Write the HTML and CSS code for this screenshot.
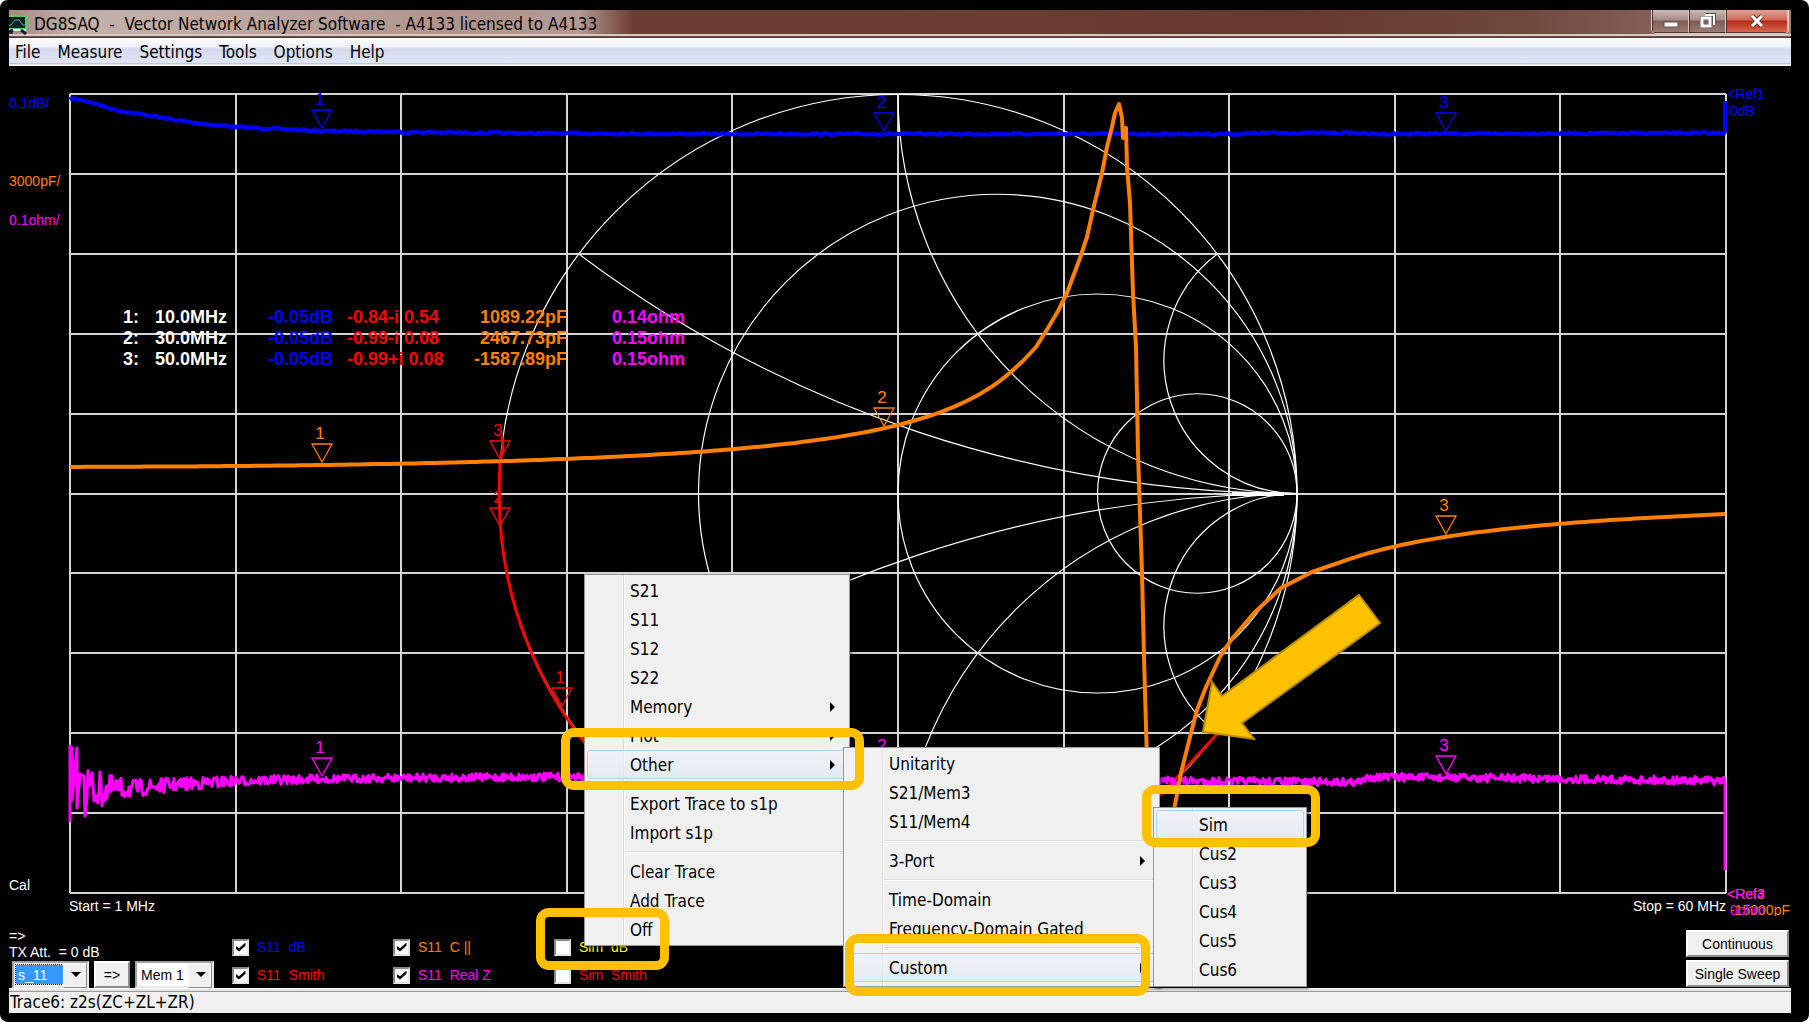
FILE: index.html
```html
<!DOCTYPE html>
<html lang="en">
<head>
<meta charset="utf-8">
<title>DG8SAQ - Vector Network Analyzer Software</title>
<link rel="stylesheet" href="styles.css">
</head>
<body>
<main class="window">
  <header class="titlebar">
    <svg class="app-icon" viewBox="0 0 18 20" aria-hidden="true">
      <rect x="-2" y="1" width="19" height="13" fill="#10201c" stroke="#4fd05a" stroke-width="2"/>
      <path d="M0 10H2L6 5H10L14 10H16" fill="none" stroke="#4aa0a8" stroke-width="1"/>
      <path d="M0 15H17" stroke="#e8e8e8" stroke-width="2"/>
      <path d="M0 17L4 15M2 16V19M12 15L17 19" fill="none" stroke="#141c34" stroke-width="3"/>
    </svg>
    <h1 class="title">DG8SAQ&nbsp; -&nbsp; Vector Network Analyzer Software&nbsp; - A4133 licensed to A4133</h1>
    <div class="window-buttons">
      <button class="wb" type="button" aria-label="Minimize">
        <svg width="18" height="16" viewBox="0 0 18 16"><rect x="2" y="9" width="14" height="5" rx="1" fill="#fff" stroke="#555" /></svg>
      </button>
      <button class="wb" type="button" aria-label="Restore">
        <svg width="18" height="16" viewBox="0 0 18 16"><g fill="none" stroke="#555" stroke-width="4"><path d="M6 2H15V11"/><rect x="3" y="5" width="8" height="8"/></g><g fill="none" stroke="#fff" stroke-width="2"><path d="M6 2H15V12"/><rect x="3" y="5" width="8" height="8" stroke-width="3"/></g></svg>
      </button>
      <button class="wb wb-close" type="button" aria-label="Close">
        <svg width="18" height="16" viewBox="0 0 18 16"><path d="M4 3L14 13M14 3L4 13" stroke="#5a3a38" stroke-width="5"/><path d="M4 3L14 13M14 3L4 13" stroke="#fff" stroke-width="3"/></svg>
      </button>
    </div>
  </header>

  <nav class="menubar">
    <a href="#">File</a><a href="#">Measure</a><a href="#">Settings</a><a href="#">Tools</a><a href="#">Options</a><a href="#">Help</a>
  </nav>

  <section class="plot">
    <svg class="chart" viewBox="9 66 1782 850" role="img" aria-label="Measurement plot">
      <defs>
        <path id="tri" d="M-10 -19H10L0 -1Z"/>
      </defs>
      <g id="grid" class="grid"></g>
      <g id="smith" class="smith"></g>
      <path class="smith-tip" d="M1232 494H1284"/>
      <path class="trace thin red" d="M502 436L503 448L500 462L499 494L500 520A399 399 0 0 0 585 743M1160 796L1184 770L1219 732"/>
      <path id="trace-blue" class="trace blue"/>
      <path id="trace-magenta" class="trace thin magenta"/>
      <path id="trace-orange" class="trace orange"/>
      <g id="markers" class="markers"></g>
      <g class="axis">
        <g class="t-blue"><text x="9" y="108">0.1dB/</text><text x="1727" y="99">&lt;Ref1</text><text x="1730" y="116">0dB</text></g>
        <g class="t-orange"><text x="9" y="186">3000pF/</text><text x="1727" y="899">&lt;Ref3</text><text x="1790" y="915" text-anchor="end">-15000pF</text></g>
        <g class="t-magenta"><text x="9" y="225">0.1ohm/</text><text x="1727" y="899">&lt;Ref4</text><text x="1730" y="915">0ohm</text></g>
        <g class="t-white"><text x="9" y="890">Cal</text><text x="69" y="911">Start = 1 MHz</text><text x="1726" y="911" text-anchor="end">Stop = 60 MHz</text></g>
      </g>
      <path class="callout-arrow" d="M1359 595L1380 623L1242 723L1254 739L1203 732L1212 682L1222 696Z"/>
    </svg>
    <table class="readout">
      <tr><th scope="row">1:</th><td class="t-white">10.0MHz</td><td class="t-blue">-0.05dB</td><td class="t-red">-0.84-i 0.54</td><td class="t-orange num">1089.22pF</td><td class="t-magenta ohm">0.14ohm</td></tr>
      <tr><th scope="row">2:</th><td class="t-white">30.0MHz</td><td class="t-blue">-0.05dB</td><td class="t-red">-0.99-i 0.08</td><td class="t-orange num">2467.73pF</td><td class="t-magenta ohm">0.15ohm</td></tr>
      <tr><th scope="row">3:</th><td class="t-white">50.0MHz</td><td class="t-blue">-0.05dB</td><td class="t-red">-0.99+i 0.08</td><td class="t-orange num">-1587.89pF</td><td class="t-magenta ohm">0.15ohm</td></tr>
    </table>
  </section>

  <section class="controls">
    <div class="source">
      <p>=&gt;</p>
      <p class="att">TX Att.&nbsp; = 0 dB</p>
      <div class="source-row">
        <span class="drop drop-focus"><select aria-label="Source"><option>s_11</option></select></span>
        <button class="btn" type="button">=&gt;</button>
        <span class="drop"><select aria-label="Memory"><option>Mem 1</option></select></span>
      </div>
    </div>
    <div class="traces">
      <label class="t-blue"><input type="checkbox" checked><span>S11  dB</span></label>
      <label class="t-orange"><input type="checkbox" checked><span>S11  C ||</span></label>
      <label class="t-yellow"><input type="checkbox"><span>Sim  dB</span></label>
      <label class="t-red"><input type="checkbox" checked><span>S11  Smith</span></label>
      <label class="t-magenta"><input type="checkbox" checked><span>S11  Real Z</span></label>
      <label class="t-red"><input type="checkbox"><span>Sim  Smith</span></label>
    </div>
    <div class="sweep">
      <button class="btn" type="button">Continuous</button>
      <button class="btn" type="button">Single Sweep</button>
    </div>
  </section>

  <footer class="status">Trace6: z2s(ZC+ZL+ZR)</footer>

  <div class="menu menu-trace">
    <button type="button">S21</button>
    <button type="button">S11</button>
    <button type="button">S12</button>
    <button type="button">S22</button>
    <button type="button" class="sub">Memory</button>
    <button type="button" class="sub">Plot</button>
    <button type="button" class="sub active">Other</button>
    <hr>
    <button type="button">Export Trace to s1p</button>
    <button type="button">Import s1p</button>
    <hr>
    <button type="button">Clear Trace</button>
    <button type="button">Add Trace</button>
    <button type="button">Off</button>
  </div>
  <div class="menu menu-other">
    <button type="button">Unitarity</button>
    <button type="button">S21/Mem3</button>
    <button type="button">S11/Mem4</button>
    <hr>
    <button type="button" class="sub">3-Port</button>
    <hr>
    <button type="button">Time-Domain</button>
    <button type="button">Frequency-Domain Gated</button>
    <hr>
    <button type="button" class="sub active">Custom</button>
  </div>
  <div class="menu menu-custom">
    <button type="button" class="active">Sim</button>
    <button type="button">Cus2</button>
    <button type="button">Cus3</button>
    <button type="button">Cus4</button>
    <button type="button">Cus5</button>
    <button type="button">Cus6</button>
  </div>

  <div class="ring ring-other"></div>
  <div class="ring ring-off"></div>
  <div class="ring ring-custom"></div>
  <div class="ring ring-sim"></div>
</main>
<script src="script.js"></script>
</body>
</html>
```
FILE: styles.css
```css
* { box-sizing: border-box; }
html { background: #fff; }
body {
  margin: 0;
  min-height: 100vh;
  padding: 10px 18px 9px 9px;
  background: #000;
  border-radius: 8px;
  font: 14px/16px "Liberation Sans", Arial, sans-serif;
  color: #000;
}
button, select { font: inherit; color: inherit; }
.window { position: relative; display: flex; flex-direction: column; }

.titlebar, .menubar, .status, .menu { font: 17px/20px "DejaVu Sans Condensed", "DejaVu Sans", sans-serif; }
.titlebar {
  height: 28px;
  display: flex;
  align-items: flex-start;
  border-bottom: 1px solid #54413d;
  background:
    linear-gradient(#0000 24px, #d8c8c4 24px, #d8c8c4 26px, #6b4a44 26px),
    linear-gradient(90deg, #a98983 0, #c4b1ac 4%, #bfa8a2 12%, #b0938c 25%, #b39a94 32%, #6e3d31 35%, #6c3c30 55%, #66382d 72%, #6f473d 85%, #8a655d 94%, #a3837c 100%);
}
.app-icon { width: 18px; height: 20px; margin-top: 5px; }
.title { flex: 1; margin: 4px 0 0 7px; font: inherit; }
.window-buttons {
  display: flex;
  margin-right: 2px;
  border: 1px solid #ddc8c4;
  border-top: 0;
  border-radius: 0 0 5px 5px;
  overflow: hidden;
}
.wb {
  width: 37px; height: 23px; padding: 0;
  display: grid; place-items: center;
  border: 1px solid #4b3532; border-top: 0; border-right: 1px solid #d9c6c2;
  background: linear-gradient(#cbb9b5 0, #a88d87 45%, #7d5d55 50%, #9a7a73 100%);
}
.wb-close { width: 62px; background: linear-gradient(#e5a296 0, #d2685a 45%, #b42a18 50%, #d8664c 100%); }

.menubar {
  height: 28px; padding: 4px 6px 0; display: flex; gap: 17px;
  background: linear-gradient(#fff 0, #eef1f9 30%, #d5dbee 40%, #dfe5f5 88%, #b9bfcd 92%, #fff 96%);
}
.menubar a { color: #000; text-decoration: none; }

.plot { position: relative; }
.chart { display: block; width: 100%; height: auto; background: #000; font-family: "Liberation Sans", Arial, sans-serif; }
.grid { stroke: #d4d4d4; stroke-width: 2; fill: none; shape-rendering: crispEdges; }
.smith { stroke: #fff; stroke-width: 1.2; fill: none; }
.smith-tip { stroke: #fff; stroke-width: 4; }
.trace { fill: none; stroke-width: 4; stroke-linejoin: round; }
.thin { stroke-width: 3; }
.red { stroke: #f00; }
.blue { stroke: #00f; }
.magenta { stroke: #f0f; }
.orange { stroke: #ff8000; }
.markers use { fill: none; stroke: currentColor; stroke-width: 1.3; }
.markers text { fill: currentColor; font-size: 17px; text-anchor: middle; }
.axis text { fill: currentColor; font-size: 14px; }
.callout-arrow { fill: #ffc000; stroke: #bc8c00; stroke-width: 2; }

.t-white { color: #fff; }
.t-blue { color: #00f; }
.t-red { color: #f00; }
.t-orange { color: #ff8000; }
.t-magenta { color: #f0f; }
.t-yellow { color: #ff0; }

.readout {
  position: absolute; left: 114px; top: 241px;
  border-collapse: collapse;
  font-size: 18px; line-height: 21px; font-weight: bold; white-space: nowrap;
}
.readout th, .readout td { padding: 0; text-align: left; width: 113px; min-width: 113px; }
.readout th { width: 32px; min-width: 32px; color: #fff; }
.readout .t-blue { width: 79px; min-width: 79px; }
.readout .t-red { width: 103px; min-width: 103px; }
.readout .num { text-align: right; width: 117px; min-width: 117px; }
.readout .ohm { padding-left: 45px; }

.controls { height: 72px; display: flex; align-items: flex-start; }
.source { width: 223px; padding-top: 12px; color: #fff; }
.source p { margin: 0; }
.source-row { display: flex; gap: 5px; margin: 1px 0 0 3px; color: #000; }
.drop {
  position: relative; width: 79px; height: 27px; padding: 2px 24px 2px 2px;
  background: #fff; border: 2px solid #a0a0a0; border-right-color: #e8e8e8; border-bottom-color: #e8e8e8;
}
.drop-focus { width: 77px; }
.drop select {
  appearance: none; display: block; width: 100%; height: 19px; padding: 0 2px; border: 0; background: #fff; outline: 0;
}
.drop-focus select { background: #39f; color: #fff; outline: 1px dotted #000; }
.drop::before {
  content: ""; position: absolute; right: 0; top: 0; width: 22px; height: 23px;
  background: #f0f0f0; border: 1px solid #fff; border-right-color: #888; border-bottom-color: #888;
  pointer-events: none;
}
.drop::after {
  content: ""; position: absolute; right: 6px; top: 9px;
  border: 5px solid #0000; border-top-color: #000; border-bottom: 0;
  pointer-events: none;
}
.btn {
  height: 27px; padding: 0; background: #f0f0f0;
  border: 2px solid #fff; border-right-color: #8a8a8a; border-bottom-color: #8a8a8a;
}
.source .btn { width: 36px; }
.traces { display: grid; grid-template-columns: repeat(3, 161px); grid-auto-rows: 28px; padding-top: 17px; }
.traces label { display: flex; align-items: center; gap: 8px; white-space: pre; }
.traces input {
  appearance: none; width: 17px; height: 17px; margin: 0; display: grid; place-items: center;
  background: #fff; border: 2px solid #8a8a8a; border-right-color: #e4e4e4; border-bottom-color: #e4e4e4;
}
.traces input:checked::before {
  content: ""; width: 10px; height: 9px; background: #000;
  clip-path: polygon(0 35%, 35% 65%, 100% 0, 100% 35%, 35% 100%, 0 70%);
}
.sweep { margin: 14px 2px 0 auto; width: 103px; display: flex; flex-direction: column; gap: 3px; }

.status {
  height: 25px; padding: 3px 1px 0; background: #f0f0f0;
  border-top: 1px solid #fff; box-shadow: inset 0 2px #e4e4e4, inset 0 3px #999;
}

.menu {
  position: absolute; display: flex; flex-direction: column; padding: 1px 2px;
  border: 1px solid #979797;
  background: linear-gradient(90deg, #f1f1f1 38px, #dcdcdc 38px, #dcdcdc 39px, #fff 39px, #fff 40px, #f0f0f0 40px);
  box-shadow: 2px 2px 2px #0006;
}
.menu button {
  position: relative; height: 29px; padding: 0 0 0 42px; text-align: left;
  border: 1px solid #0000; border-radius: 3px; background: none;
}
.menu .active { border-color: #aed0f5; background: linear-gradient(#f2f4f8a0, #dfe8f4c0); }
.menu .sub::after {
  content: ""; position: absolute; right: 11px; top: 9px;
  border: 5px solid #0000; border-left-color: #000; border-right: 0;
}
.menu hr {
  width: auto; height: 2px; margin: 4px 0 4px 38px; border: 0;
  border-top: 1px solid #dcdcdc; border-bottom: 1px solid #fff;
}
.menu-trace { left: 575px; top: 564px; width: 266px; }
.menu-other { left: 834px; top: 737px; width: 317px; padding-bottom: 4px; }
.menu-custom { left: 1144px; top: 797px; width: 154px; padding: 2px; }

.ring { position: absolute; height: 62px; border: 9px solid #ffc000; border-radius: 13px; pointer-events: none; }
.ring-other { left: 552px; top: 718px; width: 303px; }
.ring-off { left: 527px; top: 898px; width: 133px; }
.ring-custom { left: 836px; top: 924px; width: 305px; }
.ring-sim { left: 1133px; top: 775px; width: 178px; }
```
FILE: script.js
```js
// Plot frame, in chart units
const X0 = 70, X1 = 1726, Y0 = 94, Y1 = 893;
const set = (id, d) => document.getElementById(id).setAttribute('d', d);
const path = pts => 'M' + pts.map(p => p[0].toFixed(1) + ' ' + p[1].toFixed(1)).join('L');

// Repeatable noise in -1..1
let seed = 7;
const noise = () => {
  seed = (seed * 16807) % 2147483647;
  return seed / 1073741823.5 - 1;
};
const interp = (table, x) => {
  for (let i = 1; i < table.length; i++) {
    if (x <= table[i][0]) {
      const [a, b] = [table[i - 1], table[i]];
      const t = (x - a[0]) / (b[0] - a[0]);
      return a[1] + t * (b[1] - a[1]);
    }
  }
  return table[table.length - 1][1];
};

// Rectangular grid, ten divisions each way
let lines = '';
for (let i = 0; i <= 10; i++) {
  const x = Math.round(X0 + (X1 - X0) * i / 10), y = Math.round(Y0 + (Y1 - Y0) * i / 10);
  lines += `<path d="M${x} ${Y0}V${Y1}M${X0} ${y}H${X1}"/>`;
}
document.getElementById('grid').innerHTML = lines;

// Smith chart: resistance circles and reactance arcs
const cx = 898, cy = 493.5, R = 399;
let smith = '';
for (const r of [0, 1 / 3, 1, 3]) {
  smith += `<circle cx="${cx + R * r / (1 + r)}" cy="${cy}" r="${R / (1 + r)}"/>`;
}
for (const x of [1 / 3, 1, 3]) {
  const d = x * x + 1, px = cx + R * (x * x - 1) / d, dy = R * 2 * x / d, rad = R / x;
  smith += `<path d="M${px} ${cy - dy}A${rad} ${rad} 0 0 0 ${cx + R} ${cy}"/>`;
  smith += `<path d="M${px} ${cy + dy}A${rad} ${rad} 0 0 1 ${cx + R} ${cy}"/>`;
}
document.getElementById('smith').innerHTML = smith;

// S11 in dB
const blueMean = [[70, 98], [90, 102], [115, 110], [158, 117], [194, 123], [237, 127], [321, 131], [480, 133], [700, 134], [1240, 134], [1260, 133], [1362, 133], [1368, 134], [1726, 133]];
const blue = [];
for (let x = 70; x < 1725; x += 2) blue.push([x, interp(blueMean, x) + noise()]);
blue.push([1725, 131], [1725, 101]);
set('trace-blue', path(blue));

// Real part of Z
const magMean = [[70, 784], [100, 790], [130, 789], [170, 785], [237, 781], [320, 779], [400, 778], [540, 777], [1160, 781], [1362, 782], [1368, 777], [1500, 778], [1726, 781]];
const magAmp = [[70, 38], [78, 34], [84, 26], [100, 18], [112, 14], [130, 9], [170, 7], [237, 5], [320, 4], [1726, 4]];
const mag = [[70, 822], [70, 746], [72, 748], [72, 800], [75, 770], [77, 748], [77, 808], [80, 774], [84, 776], [85, 816]];
for (let x = 86; x < 1726; x += 1) mag.push([x, interp(magMean, x) + noise() * interp(magAmp, x)]);
mag.push([1725, 786], [1725, 870]);
set('trace-magenta', path(mag));

// Parallel capacitance, resonant near 39 MHz
const cap = x => {
  const f = 1 + 59 * (x - X0) / (X1 - X0);
  return 493.5 - 1018 / (1 - f * f / 1532) * 79.9 / 3000;
};
const orange = [];
for (let x = X0; x <= 1010; x += 5) orange.push([x, cap(x) + 0.5]);
orange.push([1023, 361], [1036, 347], [1048, 328], [1058, 311], [1067, 293], [1080, 258], [1087, 237], [1093, 210], [1102, 173], [1107, 147],
  [1112, 127], [1115, 113], [1119, 104], [1122, 118], [1123, 138], [1126, 128], [1127, 167], [1130, 203], [1133, 293],
  [1136, 347], [1138, 453], [1142, 573], [1144, 657], [1146, 727], [1147, 760]);
const tail = [[1174, 810], [1181, 773], [1190, 737], [1197, 710], [1206, 687], [1220, 657], [1231, 640], [1254, 613], [1281, 588], [1312, 572]];
for (let x = 1345; x <= X1; x += 5) tail.push([x, cap(x) + 0.5]);
set('trace-orange', path(orange) + path(tail));

// Frequency markers: digit and triangle whose tip touches the trace
const marks = [
  ['blue', 1, 322, 129], ['blue', 2, 884, 132], ['blue', 3, 1446, 132],
  ['orange', 1, 322, 463], ['orange', 2, 884, 427], ['orange', 3, 1446, 535],
  ['magenta', 1, 322, 777], ['magenta', 2, 884, 775], ['magenta', 3, 1446, 775],
  ['red', 3, 500, 460], ['red', 2, 500, 527], ['red', 1, 562, 707]
];
document.getElementById('markers').innerHTML = marks.map(([c, n, x, y]) =>
  `<g class="t-${c}" transform="translate(${x} ${y})"><use href="#tri"/><text x="-2" y="-24">${n}</text></g>`).join('');
```
